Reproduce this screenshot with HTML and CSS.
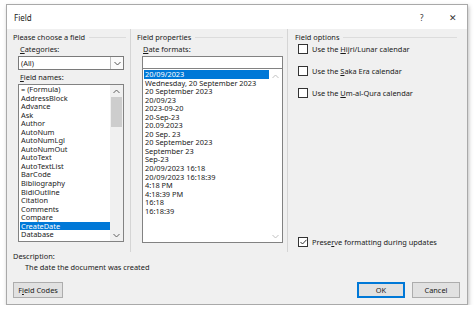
FILE: index.html
```html
<!DOCTYPE html>
<html>
<head>
<meta charset="utf-8">
<link rel="stylesheet" href="styles.css">
</head>
<body>
<div class="dialog">
  <div class="titlebar">
    <span class="title">Field</span>
    <span class="help">?</span>
    <span class="close">✕</span>
  </div>
  <div class="content">
    <div class="columns">
      <div class="col col1">
        <div class="group-head"><span>Please choose a field</span><i></i></div>
        <div class="label"><u>C</u>ategories:</div>
        <div class="combo"><span>(All)</span><b class="combo-btn"><svg width="7" height="5" viewBox="0 0 7 5"><path d="M0.5 1 L3.5 4 L6.5 1" fill="none" stroke="#555" stroke-width="1"/></svg></b></div>
        <div class="label"><u>F</u>ield names:</div>
        <div class="list list-names">
          <div class="items">
            <div>= (Formula)</div>
            <div>AddressBlock</div>
            <div>Advance</div>
            <div>Ask</div>
            <div>Author</div>
            <div>AutoNum</div>
            <div>AutoNumLgl</div>
            <div>AutoNumOut</div>
            <div>AutoText</div>
            <div>AutoTextList</div>
            <div>BarCode</div>
            <div>Bibliography</div>
            <div>BidiOutline</div>
            <div>Citation</div>
            <div>Comments</div>
            <div>Compare</div>
            <div class="sel">CreateDate</div>
            <div>Database</div>
          </div>
          <div class="scroll">
            <svg class="arr" width="7" height="5" viewBox="0 0 7 5"><path d="M0.5 4 L3.5 1 L6.5 4" fill="none" stroke="#606060" stroke-width="1"/></svg>
            <div class="track"><div class="thumb"></div></div>
            <svg class="arr" width="7" height="5" viewBox="0 0 7 5"><path d="M0.5 1 L3.5 4 L6.5 1" fill="none" stroke="#606060" stroke-width="1"/></svg>
          </div>
        </div>
      </div>
      <div class="col col2">
        <div class="group-head"><span>Field properties</span><i></i></div>
        <div class="label lab2"><u>D</u>ate formats:</div>
        <div class="textbox"></div>
        <div class="list list-dates">
          <div class="items">
            <div class="sel">20/09/2023</div>
            <div>Wednesday, 20 September 2023</div>
            <div>20 September 2023</div>
            <div>20/09/23</div>
            <div>2023-09-20</div>
            <div>20-Sep-23</div>
            <div>20.09.2023</div>
            <div>20 Sep. 23</div>
            <div>20 September 2023</div>
            <div>September 23</div>
            <div>Sep-23</div>
            <div>20/09/2023 16:18</div>
            <div>20/09/2023 16:18:39</div>
            <div>4:18 PM</div>
            <div>4:18:39 PM</div>
            <div>16:18</div>
            <div>16:18:39</div>
          </div>
          <div class="scroll disabled">
            <svg class="arr" width="7" height="5" viewBox="0 0 7 5"><path d="M0.5 4 L3.5 1 L6.5 4" fill="none" stroke="#c0c0c0" stroke-width="1"/></svg>
            <div class="track"></div>
            <svg class="arr" width="7" height="5" viewBox="0 0 7 5"><path d="M0.5 1 L3.5 4 L6.5 1" fill="none" stroke="#c0c0c0" stroke-width="1"/></svg>
          </div>
        </div>
      </div>
      <div class="col col3">
        <div class="group-head"><span>Field options</span><i></i></div>
        <div class="options">
          <label class="check"><span class="box"></span><span>Use the <u>H</u>ijri/Lunar calendar</span></label>
          <label class="check"><span class="box"></span><span>Use the <u>S</u>aka Era calendar</span></label>
          <label class="check"><span class="box"></span><span>Use the <u>U</u>m-al-Qura calendar</span></label>
        </div>
        <label class="check preserve"><span class="box checked"><svg width="7" height="6" viewBox="0 0 7 6"><path d="M0.5 3 L2.5 5 L6.5 0.8" fill="none" stroke="#333" stroke-width="1"/></svg></span><span>Prese<u>r</u>ve formatting during updates</span></label>
      </div>
    </div>
    <div class="desc">
      <div>Description:</div>
      <div class="desc-text">The date the document was created</div>
    </div>
    <div class="buttons">
      <button class="btn">F<u>i</u>eld Codes</button>
      <span class="spacer"></span>
      <button class="btn ok">OK</button>
      <button class="btn">Cancel</button>
    </div>
  </div>
</div>
</body>
</html>
```
FILE: styles.css
```css
* { box-sizing: border-box; }
html, body { margin: 0; padding: 0; background: #ffffff; }
body {
  font-family: "Noto Sans", "Open Sans", sans-serif;
  font-size: 7.4px;
  color: #1a1a1a;
}
u { text-decoration: underline; text-underline-offset: 1px; }
.dialog {
  margin: 4px 0 0 6px;
  width: 462px;
  height: 301px;
  border: 1px solid #a9a9a9;
  background: #f0f0f0;
  box-shadow: 1px 2px 4px rgba(0,0,0,0.25);
  display: flex;
  flex-direction: column;
}
.titlebar {
  height: 24px;
  background: #ffffff;
  display: flex;
  align-items: center;
  padding-left: 7px;
  font-size: 8px;
}
.title { flex: 1; }
.help { width: 29px; font-size: 8px; color: #333; }
.close { width: 18px; font-size: 9px; color: #333; }
.content {
  flex: 1;
  display: flex;
  flex-direction: column;
  padding: 0 0 0 6px;
}
.columns {
  display: flex;
  height: 223px;
}
.col { padding-top: 3px; }
.col1 { width: 117px; }
.col2 { width: 157px; border-left: 1px solid #d5d5d5; padding-left: 6px; }
.col3 { flex: 1; border-left: 1px solid #d5d5d5; padding-left: 7px; padding-right: 6px; display: flex; flex-direction: column; }
.group-head {
  display: flex;
  align-items: center;
  height: 10px;
  gap: 4px;
}
.group-head i {
  flex: 1;
  height: 1px;
  background: #dcdcdc;
  margin-right: 4px;
}
.label { padding-left: 7px; height: 9px; line-height: 9px; margin-top: 3px; margin-bottom: 2px; }
.lab2 { padding-left: 6px; }
.combo {
  margin-left: 5px;
  width: 106px;
  height: 14px;
  border: 1px solid #7a7a7a;
  background: #fff;
  display: flex;
  align-items: center;
  padding-left: 2px;
}
.combo span { flex: 1; }
.combo-btn {
  width: 13px;
  height: 12px;
  border-left: 1px solid #bdbdbd;
  display: flex;
  align-items: center;
  justify-content: center;
  background: #fafafa;
}
.list {
  border: 1px solid #828282;
  background: #fff;
  display: flex;
}
.list-names { margin-left: 5px; width: 106px; height: 158px; }
.list-dates { margin-left: 5px; width: 141px; height: 175px; padding-top: 1px; }
.textbox {
  margin-left: 5px;
  width: 141px;
  height: 12px;
  border: 1px solid #828282;
  border-bottom: none;
  background: #fff;
}
.items { flex: 1; padding-left: 1px; }
.items div {
  height: 8.56px;
  line-height: 8.56px;
  padding-left: 1px;
  white-space: nowrap;
}
.items .sel { background: #0078d7; color: #fff; }
.scroll {
  width: 13px;
  display: flex;
  flex-direction: column;
  align-items: center;
  background: #f0f0f0;
  padding: 4px 0 3px;
}
.list-dates .scroll { background: #fff; }
.scroll .arr { flex: none; }
.track { flex: 1; width: 100%; padding: 3px 1px 0; }
.thumb { height: 30px; background: #cdcdcd; }
.options { display: flex; flex-direction: column; gap: 12px; margin-top: 2px; padding-left: 3px; }
.check { display: flex; align-items: center; gap: 4px; height: 10px; }
.box {
  width: 10px; height: 10px;
  border: 1px solid #333;
  background: #fff;
  display: flex; align-items: center; justify-content: center;
}
.preserve { margin-top: auto; padding-left: 3px; margin-bottom: 5px; }
.desc { margin-top: -1px; line-height: 11px; }
.desc-text { padding-left: 12px; }
.buttons { display: flex; gap: 7px; margin-top: 9px; padding-right: 7px; }
.spacer { flex: 1; }
.btn {
  font-family: inherit;
  font-size: 7.4px;
  color: #1a1a1a;
  height: 16px;
  width: 48px;
  border: 1px solid #adadad;
  background: #e1e1e1;
  padding: 0;
}
.btn:first-child { width: 50px; }
.ok { border: 2px solid #0078d7; }
```
